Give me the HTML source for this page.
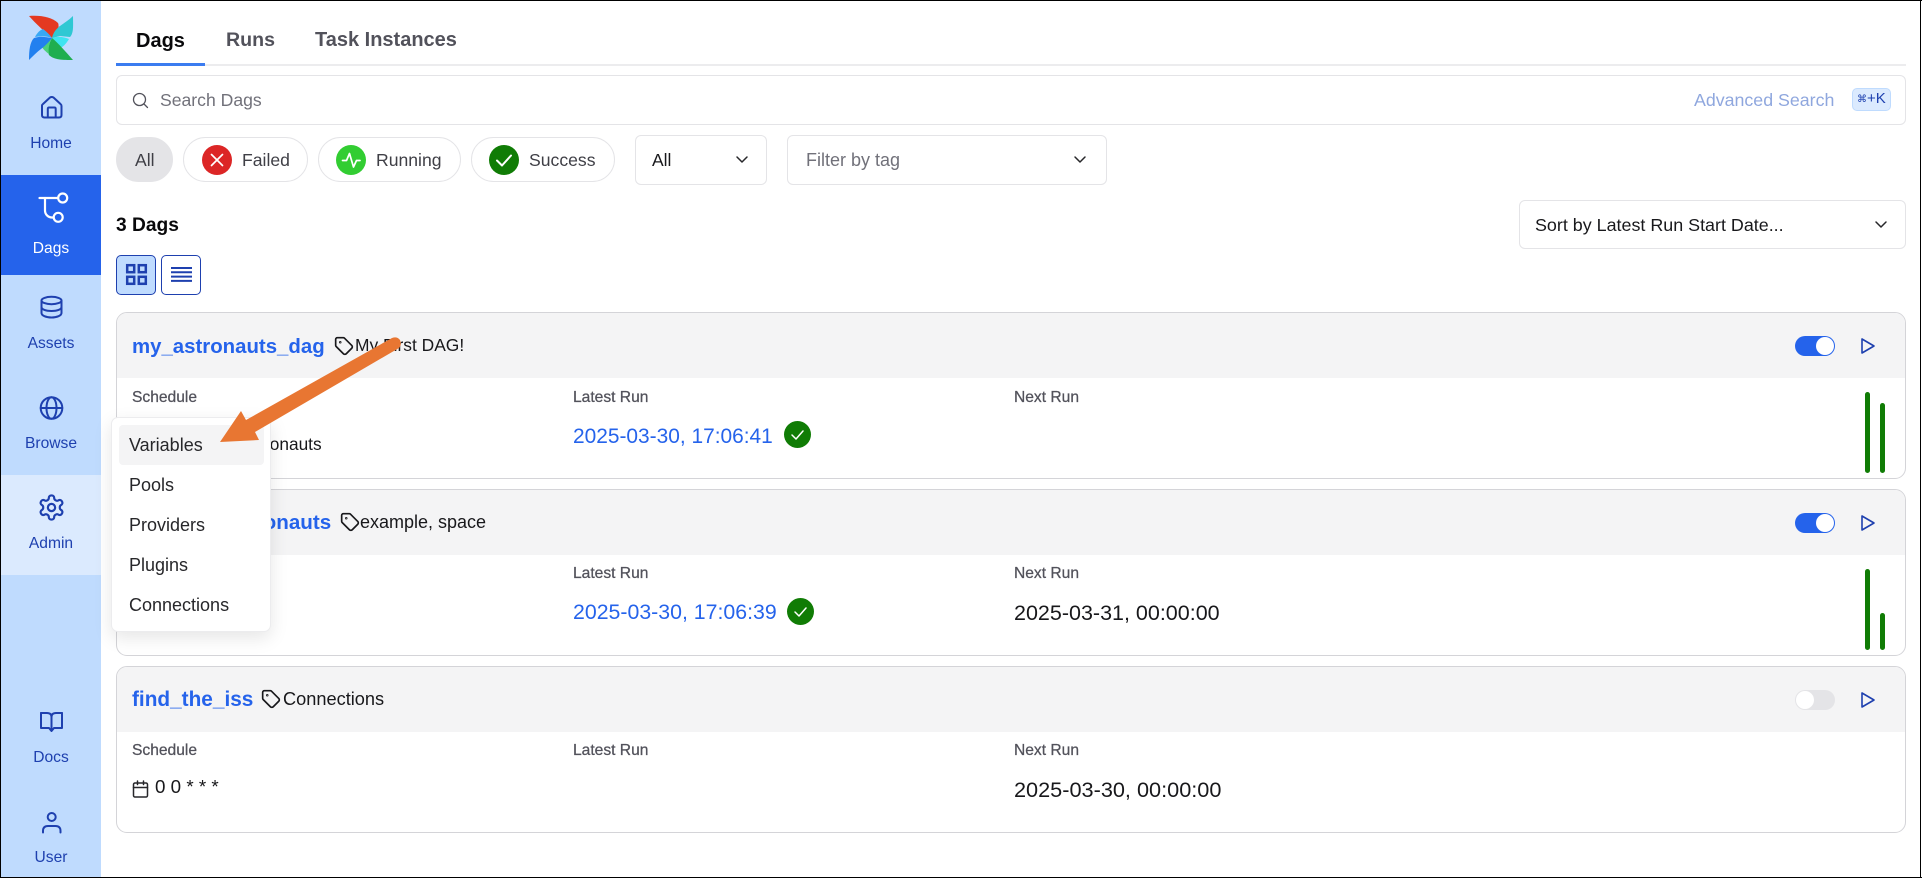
<!DOCTYPE html>
<html><head><meta charset="utf-8"><title>Dags</title>
<style>
*{box-sizing:border-box}
html,body{margin:0;padding:0;width:1922px;height:878px;overflow:hidden;background:#fff;font-family:"Liberation Sans","DejaVu Sans",sans-serif}
.a{position:absolute}
.t{position:absolute;white-space:nowrap;line-height:24px;height:24px}
svg{position:absolute;display:block;overflow:visible}
.s{fill:none;stroke-linecap:round;stroke-linejoin:round}
.nav{position:absolute;left:1px;width:100px;text-align:center;font-size:15.6px;color:#1e40af;line-height:24px;height:24px}
.box{position:absolute;background:#fff;border:1.5px solid #e4e4e7;border-radius:6px}
.pill{position:absolute;top:137px;height:45px;background:#fff;border:1.5px solid #e4e4e7;border-radius:23px}
.dot{position:absolute;top:145px;width:30px;height:30px;border-radius:50%}
.pt{font-size:17.6px;color:#3f3f46;top:148px}
.card{position:absolute;left:116px;width:1790px;height:167px;border:1.5px solid #d4d4d8;border-radius:11px;overflow:hidden;background:#fff}
.hd{position:absolute;left:0;top:0;right:0;height:65px;background:#f4f4f5}
.title{font-size:20.4px;font-weight:700;color:#2563eb}
.tag{font-size:17.4px;color:#18181b}
.lab{font-size:15.6px;color:#52525b;-webkit-text-stroke:.25px #52525b}
.run{color:#2563eb}
.val{color:#18181b}
.tg{position:absolute;left:1795px;width:40px;height:20px;border-radius:10px;background:#2563eb}
.tg i{position:absolute;right:1px;top:1px;width:18px;height:18px;border-radius:50%;background:#fff}
.bar{position:absolute;width:5px;border-radius:2.5px;background:#107c05}
.m{font-size:18px;color:#27272a;left:129px}
</style></head><body>

<!-- frame -->
<div class="a" style="left:0;top:0;width:1922px;height:1px;background:#000"></div>
<div class="a" style="left:0;top:877px;width:1922px;height:1px;background:#000"></div>
<div class="a" style="left:1920px;top:0;width:1px;height:878px;background:#000"></div>

<!-- sidebar -->
<div class="a" style="left:1px;top:1px;width:100px;height:876px;background:#bfdbfe"></div>
<div class="a" style="left:0;top:0;width:1px;height:878px;background:#000"></div>
<div class="a" style="left:1px;top:175px;width:100px;height:100px;background:#2563eb"></div>
<div class="a" style="left:1px;top:475px;width:100px;height:100px;background:#dbeafe"></div>

<!-- logo -->
<svg style="left:0;top:0" width="110" height="70" viewBox="0 0 110 70">
<path d="M29 16 C40 15 52 17 58 23 C60 27 56 33 52 38 C46 33 36 24 29 16Z" fill="#e43921"/>
<path d="M59 26 C61 29 61 33 60 34 L52 38 C55 34 57 30 59 26Z" fill="#f37a5e"/>
<path d="M73 16 C73 25 74 33 70 37 L60 36 L52 38 C53 33 56 29 60 26 C64 23 69 20 73 16Z" fill="#2fc8d3"/>
<path d="M52 38 C58 36 64 37 69 39 C66 44 63 47 60 48 C57 44 54 41 52 38Z" fill="#3ee4f0"/>
<path d="M73 60 C63 60 54 60 49 55 C47 51 49 43 52 38 C58 43 66 52 73 60Z" fill="#1fae50"/>
<path d="M52 38 C49 43 48 49 49 54 C46 52 43 49 42 47 C45 44 49 41 52 38Z" fill="#4dd07a"/>
<path d="M29 60 C29 50 30 42 34 38 C40 36 46 37 52 38 C49 42 45 46 41 49 C37 52 33 56 29 60Z" fill="#2280ef"/>
<path d="M35 37 C37 33 40 30 43 29 C47 32 50 35 52 38 C47 36 41 36 35 37Z" fill="#38a8f5"/>
</svg>

<!-- nav icons (drawn in page coordinates) -->
<svg style="left:0;top:0" width="110" height="878" viewBox="0 0 110 878" class="s" stroke="#1e40af" stroke-width="2">
<!-- home -->
<path d="M42 105.500Q42 104.800 43 104L50 97.500Q51.700 96.500 53.500 97.500L60.500 104Q61.500 104.800 61.500 106V115Q61.500 117.500 59 117.500H44.500Q42 117.500 42 115Z"/>
<path d="M47.800 117V109Q47.800 107.500 49 107.500H54.500Q55.700 107.500 55.700 109V117"/>
<!-- assets -->
<ellipse cx="51.500" cy="300.500" rx="10" ry="3.700"/>
<path d="M41.500 300.500V313C41.500 315.500 46 317.500 51.500 317.500S61.500 315.500 61.500 313V300.500"/>
<path d="M41.500 307C41.500 309.500 46 311 51.500 311S61.500 309.500 61.500 307"/>
<!-- browse -->
<circle cx="51.500" cy="408" r="10.800"/>
<ellipse cx="51.500" cy="408" rx="5" ry="10.800"/>
<path d="M40.700 408H62.300"/>
<!-- docs -->
<path d="M41 713H47Q51.500 713 51.500 717V730"/>
<path d="M62 713H56Q51.500 713 51.500 717"/>
<path d="M41 713V728H49L51.500 731L54 728H62V713"/>
<!-- user -->
<circle cx="51.700" cy="817" r="4"/>
<path d="M43 832.500V831Q43 826 48 826H55.500Q60.500 826 60.500 831V832.500"/>
</svg>
<div class="nav" style="top:132px">Home</div>

<svg style="left:0;top:175px" width="100" height="60" viewBox="0 175 100 60" class="s" stroke="#fff" stroke-width="2.200"><path d="M39.500 198H57.500"/><circle cx="62.700" cy="198" r="4.500"/><path d="M45 198V210.500a7 7 0 0 0 7 7H53.500"/><circle cx="58.200" cy="217.300" r="4.500"/></svg>
<div class="nav" style="top:237px;color:#fff">Dags</div>
<div class="nav" style="top:332px">Assets</div>
<div class="nav" style="top:432px">Browse</div>

<svg style="left:37px;top:493px" width="29" height="29" viewBox="0 0 24 24" class="s" stroke="#1e40af" stroke-width="1.800"><path d="M12.220 2h-.440a2 2 0 0 0-2 2v.180a2 2 0 0 1-1 1.730l-.430.250a2 2 0 0 1-2 0l-.150-.080a2 2 0 0 0-2.730.730l-.220.380a2 2 0 0 0 .730 2.730l.150.100a2 2 0 0 1 1 1.720v.510a2 2 0 0 1-1 1.740l-.150.090a2 2 0 0 0-.730 2.730l.220.380a2 2 0 0 0 2.730.730l.150-.080a2 2 0 0 1 2 0l.430.250a2 2 0 0 1 1 1.730V20a2 2 0 0 0 2 2h.440a2 2 0 0 0 2-2v-.180a2 2 0 0 1 1-1.730l.430-.250a2 2 0 0 1 2 0l.150.080a2 2 0 0 0 2.730-.730l.220-.390a2 2 0 0 0-.730-2.730l-.150-.080a2 2 0 0 1-1-1.740v-.500a2 2 0 0 1 1-1.740l.150-.090a2 2 0 0 0 .730-2.730l-.220-.380a2 2 0 0 0-2.730-.730l-.150.080a2 2 0 0 1-2 0l-.430-.250a2 2 0 0 1-1-1.730V4a2 2 0 0 0-2-2z"/><circle cx="12" cy="12" r="3"/></svg>
<div class="nav" style="top:532px">Admin</div>
<div class="nav" style="top:746px">Docs</div>
<div class="nav" style="top:846px">User</div>

<!-- tabs -->
<div class="a" style="left:116px;top:64px;width:1790px;height:2px;background:#ececee"></div>
<div class="a" style="left:116px;top:63px;width:89px;height:3px;background:#3b7cf0"></div>
<div class="t" style="left:136px;top:29px;font-size:20px;font-weight:700;color:#09090b">Dags</div>
<div class="t" style="left:226px;top:28px;font-size:19.6px;font-weight:700;color:#52525b">Runs</div>
<div class="t" style="left:315px;top:28px;font-size:20px;font-weight:700;color:#52525b">Task Instances</div>

<!-- search -->
<div class="box" style="left:116px;top:75px;width:1790px;height:50px"></div>
<svg style="left:132px;top:92px" width="17" height="17" viewBox="0 0 17 17" class="s" stroke="#52525b" stroke-width="1.300"><circle cx="7.500" cy="7.500" r="6"/><path d="M12 12l3.500 3.500"/></svg>
<div class="t" style="left:160px;top:88px;font-size:17.6px;color:#71717a">Search Dags</div>
<div class="t" style="left:1694px;top:88px;font-size:17.8px;color:#8fa7de">Advanced Search</div>
<div class="a" style="left:1852px;top:88px;width:39px;height:23px;background:#dbeafe;border:1px solid #bfdbfe;border-radius:5px"></div>
<div class="t" style="left:1857px;top:87px;font-size:15px;color:#1e40af"><span style="font-size:10px;position:relative;top:-1px">⌘</span>+K</div>

<!-- pills -->
<div class="pill" style="left:116px;width:57px;background:#e4e4e7;border-color:#e4e4e7"></div>
<div class="t pt" style="left:135px">All</div>
<div class="pill" style="left:183px;width:125px"></div>
<div class="dot" style="left:202px;background:#dc2626"></div>
<svg style="left:202px;top:145px" width="30" height="30" viewBox="0 0 30 30" class="s" stroke="#fff" stroke-width="1.700"><path d="M9.500 9.500l11 11M20.500 9.500l-11 11"/></svg>
<div class="t pt" style="left:242px">Failed</div>
<div class="pill" style="left:318px;width:143px"></div>
<div class="dot" style="left:336px;background:#32cd32"></div>
<svg style="left:336px;top:145px" width="30" height="30" viewBox="0 0 30 30" class="s" stroke="#fff" stroke-width="1.700"><path d="M6.500 15.500h4l3-7 4 13.500 3-6.500h3.500"/></svg>
<div class="t pt" style="left:376px">Running</div>
<div class="pill" style="left:471px;width:144px"></div>
<div class="dot" style="left:489px;background:#107c05"></div>
<svg style="left:489px;top:145px" width="30" height="30" viewBox="0 0 30 30" class="s" stroke="#fff" stroke-width="2"><path d="M8 15.500l5 5 9-10"/></svg>
<div class="t pt" style="left:529px">Success</div>

<!-- selects -->
<div class="box" style="left:635px;top:135px;width:132px;height:50px"></div>
<div class="t" style="left:652px;top:148px;font-size:17.5px;color:#18181b">All</div>
<svg style="left:736px;top:156px" width="12" height="8" viewBox="0 0 12 8" class="s" stroke="#27272a" stroke-width="1.500"><path d="M1 1l5 5 5-5"/></svg>
<div class="box" style="left:787px;top:135px;width:320px;height:50px"></div>
<div class="t" style="left:806px;top:148px;font-size:18px;color:#71717a">Filter by tag</div>
<svg style="left:1074px;top:156px" width="12" height="8" viewBox="0 0 12 8" class="s" stroke="#27272a" stroke-width="1.500"><path d="M1 1l5 5 5-5"/></svg>

<!-- count / sort -->
<div class="t" style="left:116px;top:214px;font-size:19.2px;font-weight:700;color:#09090b">3 Dags</div>
<div class="box" style="left:1519px;top:200px;width:387px;height:49px"></div>
<div class="t" style="left:1535px;top:213px;font-size:17.9px;color:#18181b">Sort by Latest Run Start Date...</div>
<svg style="left:1875px;top:221px" width="12" height="8" viewBox="0 0 12 8" class="s" stroke="#27272a" stroke-width="1.500"><path d="M1 1l5 5 5-5"/></svg>

<!-- view toggles -->
<div class="a" style="left:116px;top:255px;width:40px;height:40px;background:#bfdbfe;border:1.500px solid #1e40af;border-radius:5px"></div>
<svg style="left:126px;top:264px" width="21" height="21" viewBox="0 0 21 21" fill="none" stroke="#1e40af" stroke-width="2.500"><rect x="1.200" y="1.200" width="7" height="7"/><rect x="12.800" y="1.200" width="7" height="7"/><rect x="1.200" y="12.800" width="7" height="7"/><rect x="12.800" y="12.800" width="7" height="7"/></svg>
<div class="a" style="left:161px;top:255px;width:40px;height:40px;background:#fff;border:1.500px solid #1e40af;border-radius:5px"></div>
<svg style="left:171px;top:267px" width="21" height="15" viewBox="0 0 21 15" stroke="#1e40af" stroke-width="2" fill="none"><path d="M0 1h21M0 5.300h21M0 9.600h21M0 13.900h21"/></svg>

<!-- cards -->
<div class="card" style="top:312px"><div class="hd"></div></div>
<div class="card" style="top:489px"><div class="hd"></div></div>
<div class="card" style="top:666px"><div class="hd"></div></div>

<!-- card 1 -->
<div class="t title" style="left:132px;top:335px">my_astronauts_dag</div>
<svg style="left:334px;top:336px" width="20" height="20" viewBox="0 0 24 24" class="s" stroke="#18181b" stroke-width="2"><path d="M12.586 2.586A2 2 0 0 0 11.172 2H4a2 2 0 0 0-2 2v7.172a2 2 0 0 0 .586 1.414l8.704 8.704a2.426 2.426 0 0 0 3.420 0l6.580-6.580a2.426 2.426 0 0 0 0-3.420z"/><circle cx="7.500" cy="7.500" r=".5"/></svg>
<div class="t tag" style="left:355px;top:333px">My First DAG!</div>
<div class="t lab" style="left:132px;top:386px">Schedule</div>
<div class="t lab" style="left:573px;top:386px">Latest Run</div>
<div class="t lab" style="left:1014px;top:386px">Next Run</div>
<div class="t val" style="left:166px;top:432px;font-size:17.3px">example_astronauts</div>
<div class="t run" style="left:573px;top:425px;font-size:20.9px">2025-03-30, 17:06:41</div>
<div class="a" style="left:784px;top:421px;width:27px;height:27px;border-radius:50%;background:#107c05"></div>
<svg style="left:784px;top:421px" width="27" height="27" viewBox="0 0 27 27" class="s" stroke="#fff" stroke-width="1.500"><path d="M8 14l4 4 7-8"/></svg>
<div class="tg" style="top:336px"><i></i></div>
<svg style="left:1861px;top:338px" width="14" height="16" viewBox="0 0 14 16" class="s" stroke="#1e40af" stroke-width="1.600"><path d="M1 1v14l12-7z"/></svg>
<div class="bar" style="left:1865px;top:392px;height:81px"></div>
<div class="bar" style="left:1880px;top:403px;height:70px"></div>

<!-- card 2 -->
<div class="t title" style="left:132px;top:511px;font-size:20.6px">example_astronauts</div>
<svg style="left:340px;top:512px" width="20" height="20" viewBox="0 0 24 24" class="s" stroke="#18181b" stroke-width="2"><path d="M12.586 2.586A2 2 0 0 0 11.172 2H4a2 2 0 0 0-2 2v7.172a2 2 0 0 0 .586 1.414l8.704 8.704a2.426 2.426 0 0 0 3.420 0l6.580-6.580a2.426 2.426 0 0 0 0-3.420z"/><circle cx="7.500" cy="7.500" r=".5"/></svg>
<div class="t tag" style="left:360px;top:510px;font-size:18px">example, space</div>
<div class="t lab" style="left:132px;top:562px">Schedule</div>
<div class="t lab" style="left:573px;top:562px">Latest Run</div>
<div class="t lab" style="left:1014px;top:562px">Next Run</div>
<div class="t run" style="left:573px;top:600px;font-size:21.3px">2025-03-30, 17:06:39</div>
<div class="a" style="left:787px;top:598px;width:27px;height:27px;border-radius:50%;background:#107c05"></div>
<svg style="left:787px;top:598px" width="27" height="27" viewBox="0 0 27 27" class="s" stroke="#fff" stroke-width="1.500"><path d="M8 14l4 4 7-8"/></svg>
<div class="t val" style="left:1014px;top:601px;font-size:21.500px">2025-03-31, 00:00:00</div>
<div class="tg" style="top:513px"><i></i></div>
<svg style="left:1861px;top:515px" width="14" height="16" viewBox="0 0 14 16" class="s" stroke="#1e40af" stroke-width="1.600"><path d="M1 1v14l12-7z"/></svg>
<div class="bar" style="left:1865px;top:569px;height:81px"></div>
<div class="bar" style="left:1880px;top:613px;height:37px"></div>

<!-- card 3 -->
<div class="t title" style="left:132px;top:688px;font-size:20.8px">find_the_iss</div>
<svg style="left:261px;top:689px" width="20" height="20" viewBox="0 0 24 24" class="s" stroke="#18181b" stroke-width="2"><path d="M12.586 2.586A2 2 0 0 0 11.172 2H4a2 2 0 0 0-2 2v7.172a2 2 0 0 0 .586 1.414l8.704 8.704a2.426 2.426 0 0 0 3.420 0l6.580-6.580a2.426 2.426 0 0 0 0-3.420z"/><circle cx="7.500" cy="7.500" r=".5"/></svg>
<div class="t tag" style="left:283px;top:687px;font-size:18.2px">Connections</div>
<div class="t lab" style="left:132px;top:739px">Schedule</div>
<div class="t lab" style="left:573px;top:739px">Latest Run</div>
<div class="t lab" style="left:1014px;top:739px">Next Run</div>
<svg style="left:132px;top:780px" width="17" height="18" viewBox="0 0 17 18" class="s" stroke="#27272a" stroke-width="1.500"><rect x="1.500" y="3" width="14" height="14" rx="1.500"/><path d="M1.500 7.500h14M5.500 1v3.500M11.500 1v3.500"/></svg>
<div class="t val" style="left:155px;top:775px;font-size:18.8px">0 0 * * *</div>
<div class="t val" style="left:1014px;top:778px;font-size:21.700px">2025-03-30, 00:00:00</div>
<div class="tg" style="top:690px;background:#e4e4e7"><i style="right:auto;left:1px"></i></div>
<svg style="left:1861px;top:692px" width="14" height="16" viewBox="0 0 14 16" class="s" stroke="#1e40af" stroke-width="1.600"><path d="M1 1v14l12-7z"/></svg>

<!-- dropdown menu -->
<div class="a" style="left:111px;top:417px;width:160px;height:215px;background:#fff;border:1px solid #ececee;border-radius:7px;box-shadow:0 6px 18px rgba(0,0,0,.1)"></div>
<div class="a" style="left:119px;top:425px;width:145px;height:40px;background:#f4f4f5;border-radius:4px"></div>
<div class="t m" style="top:433px">Variables</div>
<div class="t m" style="top:473px">Pools</div>
<div class="t m" style="top:513px">Providers</div>
<div class="t m" style="top:553px">Plugins</div>
<div class="t m" style="top:593px">Connections</div>

<!-- arrow -->
<svg style="left:0;top:0" width="1922" height="878" viewBox="0 0 1922 878"><path d="M220 442L241 411L246 420L392 338Q397 336 400 340Q402 345 399 348L255 432L259 440Z" fill="#e87632"/></svg>

</body></html>
